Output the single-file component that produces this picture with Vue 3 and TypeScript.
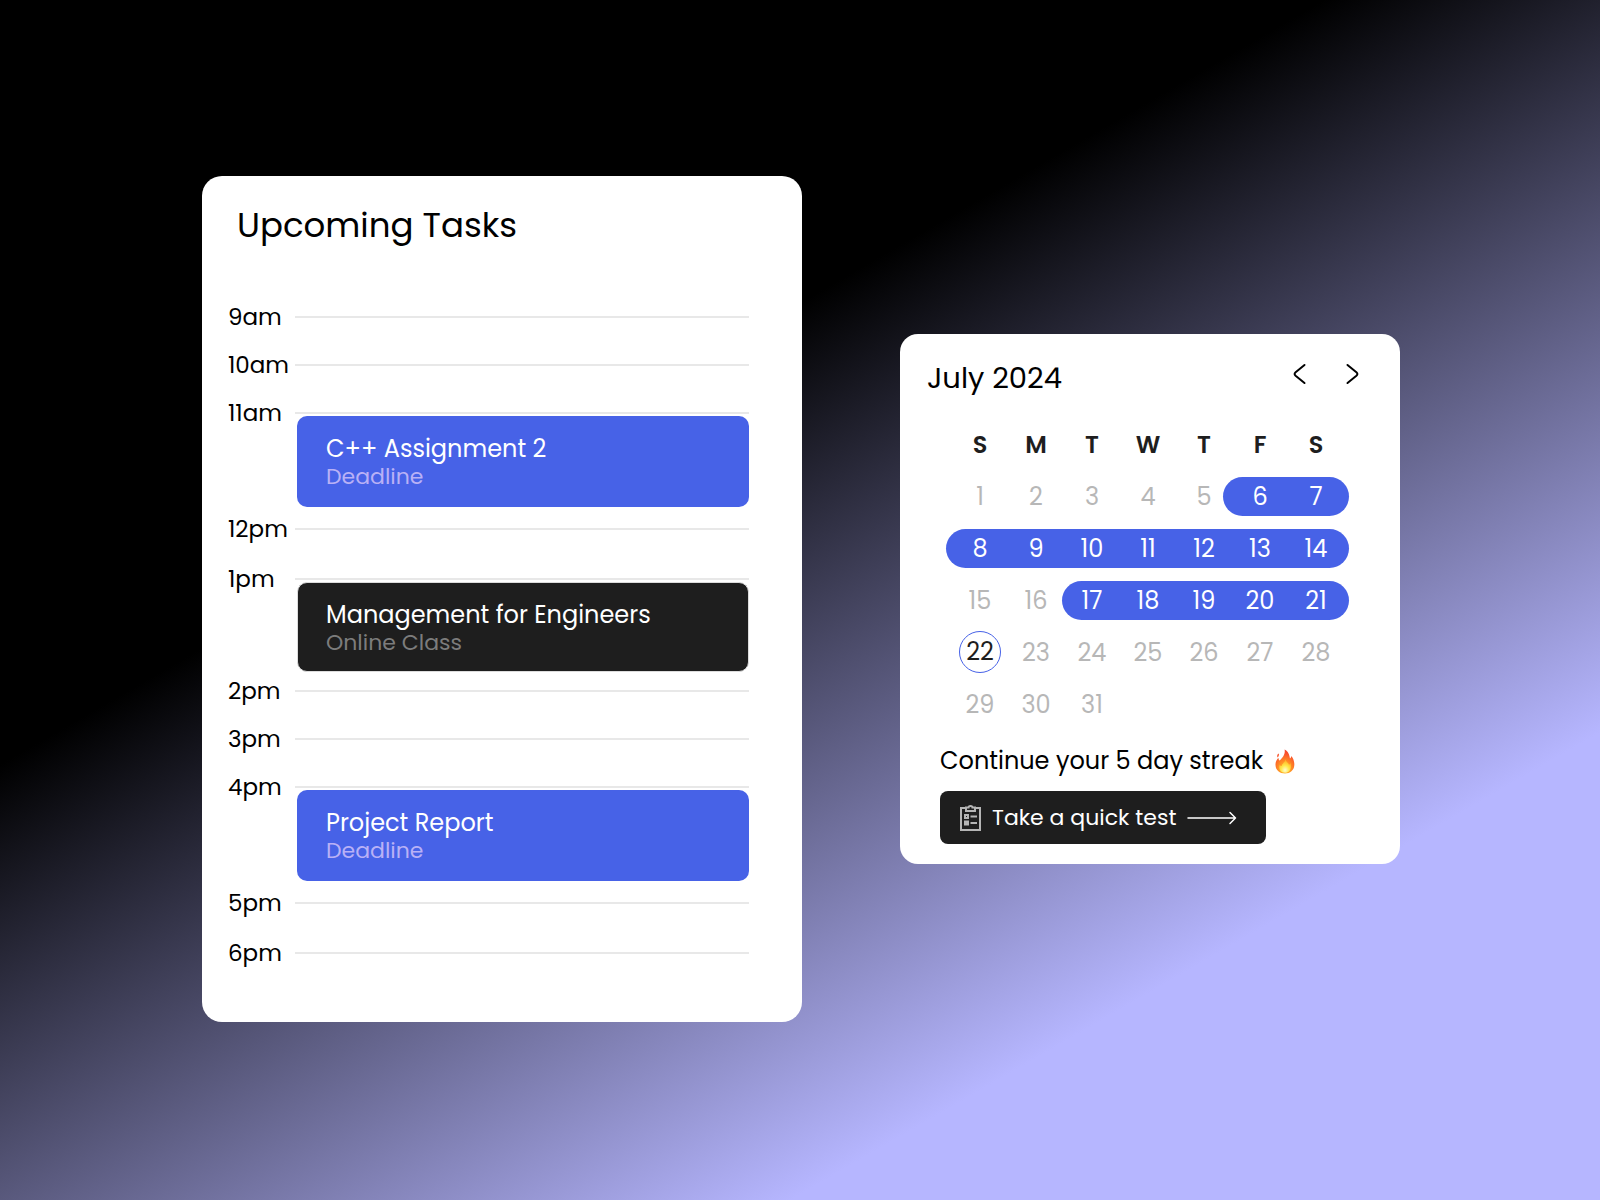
<script setup lang="ts">
interface Task {
  title: string
  kind: string
  tone: 'blue' | 'dark'
}

interface Slot {
  time: string
  height: number
  task?: Task
}

interface Day {
  n: number
  state?: 'streak' | 'today'
  lead?: number
  last?: boolean
}

const slots: Slot[] = [
  { time: '9am', height: 48 },
  { time: '10am', height: 48 },
  { time: '11am', height: 116, task: { title: 'C++ Assignment 2', kind: 'Deadline', tone: 'blue' } },
  { time: '12pm', height: 50 },
  { time: '1pm', height: 112, task: { title: 'Management for Engineers', kind: 'Online Class', tone: 'dark' } },
  { time: '2pm', height: 48 },
  { time: '3pm', height: 48 },
  { time: '4pm', height: 116, task: { title: 'Project Report', kind: 'Deadline', tone: 'blue' } },
  { time: '5pm', height: 50 },
  { time: '6pm', height: 50 },
]

const weekdays: string[] = ['S', 'M', 'T', 'W', 'T', 'F', 'S']

// First day of each highlighted run, with how far its pill reaches past the cell.
const leads: Record<number, number> = { 6: 9, 8: 6, 17: 2 }
const inStreak = (n: number): boolean => (n >= 6 && n <= 14) || (n >= 17 && n <= 21)

const weeks: Day[][] = Array.from({ length: 5 }, (_, w) =>
  Array.from({ length: 7 }, (_, d) => w * 7 + d + 1)
    .filter((n) => n <= 31)
    .map((n) => ({
      n,
      state: n === 22 ? 'today' : inStreak(n) ? 'streak' : undefined,
      lead: leads[n],
      last: inStreak(n) && n % 7 === 0,
    })),
)
</script>

<template>
  <main class="page">
    <section class="tasks">
      <h1>Upcoming Tasks</h1>
      <ol class="slots">
        <li v-for="s in slots" :key="s.time" class="slot" :style="{ height: s.height + 'px' }">
          <span class="time">{{ s.time }}</span>
          <div class="lane">
            <article v-if="s.task" class="task" :class="s.task.tone">
              <h2>{{ s.task.title }}</h2>
              <p>{{ s.task.kind }}</p>
            </article>
          </div>
        </li>
      </ol>
    </section>

    <section class="calendar">
      <header class="bar">
        <h2>July 2024</h2>
        <div class="nav">
          <button type="button" aria-label="Previous month">
            <svg width="14" height="22" viewBox="0 0 14 22"><path d="M12.500 2 L3.6 9.2 Q1.6 11 3.6 12.8 L12.500 20" /></svg>
          </button>
          <button type="button" aria-label="Next month">
            <svg width="14" height="22" viewBox="0 0 14 22"><path d="M1.500 2 L10.400 9.2 Q12.400 11 10.400 12.800 L1.500 20" /></svg>
          </button>
        </div>
      </header>

      <table class="month">
        <thead>
          <tr>
            <th v-for="(d, i) in weekdays" :key="i" scope="col">{{ d }}</th>
          </tr>
        </thead>
        <tbody>
          <tr v-for="(week, w) in weeks" :key="w">
            <td v-for="day in week" :key="day.n">
              <span
                class="day"
                :class="[day.state, { first: day.lead, last: day.last }]"
                :style="day.lead ? { '--lead': day.lead + 'px' } : undefined"
              >{{ day.n }}</span>
            </td>
          </tr>
        </tbody>
      </table>

      <div class="streak-box">
        <p class="streak-text">
          Continue your 5 day streak
          <svg class="flame" width="20" height="25" viewBox="0 0 20 25" aria-hidden="true">
            <defs>
              <radialGradient id="flame-outer" cx="0.5" cy="0.85" r="0.85">
                <stop offset="0" stop-color="#ffc52e" />
                <stop offset="0.45" stop-color="#ff8a24" />
                <stop offset="0.8" stop-color="#f9502c" />
                <stop offset="1" stop-color="#f4442e" />
              </radialGradient>
              <radialGradient id="flame-inner" cx="0.5" cy="0.8" r="0.7">
                <stop offset="0" stop-color="#fffbd0" />
                <stop offset="0.5" stop-color="#ffe84a" />
                <stop offset="1" stop-color="#ffb428" />
              </radialGradient>
            </defs>
            <path fill="url(#flame-outer)" d="M9.600 0.500 C13.500 2.500 14.500 6 15 9.500 C15.800 9 16.200 8 16.300 7 C18.500 9.500 19.500 13 19.300 16 C19 21.500 15 24.500 10 24.500 C4.800 24.500 0.700 21.500 0.500 16 C0.400 13 1.800 10.500 3.400 8.800 C3.500 10.200 4 11.200 4.800 11.600 C7.500 8.500 10.500 5.500 9.600 0.500 Z" />
            <path fill="#f9603a" d="M3.600 4.500 C4.600 5.500 3.900 7 2.600 8.500 C1.600 7 2.200 5.500 3.600 4.500 Z" />
            <path fill="url(#flame-inner)" d="M10.600 10.500 C11.200 13.500 13.600 13.500 14 15.800 C14.800 15.500 15.100 14.800 15.200 14 C17.200 18.500 15 23.800 10 23.800 C5 23.800 3.200 19.500 4.800 15.500 C5.200 16.500 5.800 17 6.600 17 C7 14.500 9.800 13.500 10.600 10.500 Z" />
          </svg>
        </p>
        <button type="button" class="quick">
          <svg class="clip" width="21" height="26" viewBox="0 0 21 26" aria-hidden="true">
            <path d="M6 3 H1 V25 H20 V3 H15" />
            <path d="M6 2.500 H8.500 Q8.500 1 10.500 1 Q12.500 1 12.500 2.500 H15 V6 H6 Z" />
            <rect x="5" y="10" width="3" height="3" />
            <rect x="5" y="16.500" width="3" height="3" fill="currentColor" />
            <path d="M10.500 11.500 H17 M10.500 18 H17" />
          </svg>
          <span>Take a quick test</span>
          <svg class="arrow" width="50" height="14" viewBox="0 0 50 14" aria-hidden="true">
            <path d="M1 7 H48.500 M43 1.500 L48.500 7 L43 12.500" stroke-width="1.5" />
          </svg>
        </button>
      </div>
    </section>
  </main>
</template>

<style>
body {
  margin: 0;
}
</style>

<style scoped>
.page {
  box-sizing: border-box;
  min-height: 100vh;
  display: flex;
  align-items: center;
  justify-content: center;
  gap: 98px;
  padding: 24px 24px 26px 26px;
  background: linear-gradient(150deg, #000 36%, #b6b6ff 78%);
  color: #000;
  font-family: Poppins, Inter, "Open Sans", sans-serif;
}

h1,
h2,
p {
  margin: 0;
  font-weight: 400;
}

button {
  font: inherit;
  border: 0;
  cursor: pointer;
}

svg {
  fill: none;
  stroke-linecap: round;
  stroke-linejoin: round;
}

.tasks {
  box-sizing: border-box;
  flex: 0 1 600px;
  padding: 24px 53px 44px 26px;
  border-radius: 20px;
  background: #fff;
}

.tasks h1 {
  padding-left: 9px;
  font-size: 34px;
  line-height: 50px;
}

.slots {
  list-style: none;
  margin: 0;
  padding: 42px 0 0;
}

.slot {
  display: flex;
}

.time {
  flex: 0 0 67px;
  font-size: 23px;
  line-height: 50px;
}

.lane {
  flex: 1;
  margin-top: 24px;
  border-top: 2px solid #e8e8e8;
}

.task {
  box-sizing: border-box;
  height: 91px;
  margin: 2px 0 0 2px;
  padding: 18px 29px;
  border-radius: 10px;
  color: #fff;
}

.task h2 {
  font-size: 24px;
  line-height: 30px;
}

.task p {
  font-size: 22px;
  line-height: 26px;
}

.blue {
  background: #4762e7;
}

.blue p {
  color: #b9b1f6;
}

.dark {
  height: 90px;
  padding: 17px 28px;
  border: 1px solid #dcdcdc;
  background: #1e1e1e;
}

.dark p {
  color: #7c7c7c;
}

.calendar {
  box-sizing: border-box;
  flex: 0 1 500px;
  padding: 24px 40px 20px;
  border-radius: 18px;
  background: #fff;
}

.bar {
  display: flex;
  justify-content: space-between;
  margin: 0 0 0 -13px;
}

.bar h2 {
  font-size: 29px;
  line-height: 40px;
}

.nav {
  display: flex;
  gap: 40px;
  height: 32px;
}

.nav button {
  display: flex;
  align-items: center;
  padding: 0;
  background: none;
}

.nav path {
  stroke: #000;
  stroke-width: 2;
}

.month {
  width: 392px;
  margin: 20px 0 0 12px;
  border-collapse: collapse;
  table-layout: fixed;
  font-size: 24px;
  text-align: center;
}

.month th {
  height: 52px;
  padding: 0;
  color: #1e1e1e;
  font-weight: 600;
}

.month td {
  height: 52px;
  padding: 0;
  color: #b7b7b7;
}

.day {
  display: block;
  line-height: 39px;
}

.streak {
  background: #4762e7;
  color: #fff;
}

.first {
  margin-left: calc(-1 * var(--lead));
  padding-left: var(--lead);
  border-radius: 20px 0 0 20px;
}

.last {
  margin-right: -5px;
  padding-right: 5px;
  border-radius: 0 20px 20px 0;
}

.today {
  width: 40px;
  margin: 0 auto;
  border: 1px solid #4762e7;
  border-radius: 50%;
  color: #1e1e1e;
  line-height: 40px;
}

.streak-text {
  display: flex;
  align-items: center;
  gap: 12px;
  margin-top: 14px;
  font-size: 24px;
  line-height: 34px;
}

.flame {
  flex: none;
}

.quick {
  display: flex;
  align-items: center;
  height: 53px;
  margin-top: 13px;
  padding: 0 29px 0 20px;
  border-radius: 8px;
  background: #1e1e1e;
  color: #fff;
  font-size: 22px;
  white-space: nowrap;
}

.clip {
  margin-right: 11px;
  color: #b5b5b5;
  stroke: currentColor;
  stroke-width: 2;
  stroke-linecap: butt;
  stroke-linejoin: miter;
}

.arrow {
  margin-left: 11px;
  stroke: #fff;
}
</style>
